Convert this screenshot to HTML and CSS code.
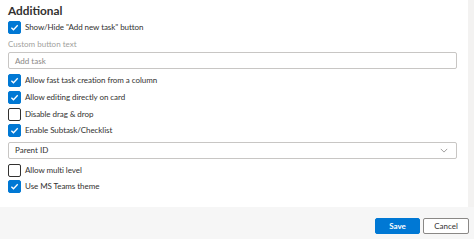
FILE: index.html
```html
<!DOCTYPE html>
<html>
<head>
<meta charset="utf-8">
<link rel="stylesheet" href="styles.css">
</head>
<body>
<div class="panel">
  <div class="main">
    <div class="content">
      <h2 class="title">Additional</h2>
      <label class="check on r1"><span class="box"><svg viewBox="0 0 12 12"><path d="M2.6 6.2 L4.9 8.5 L9.5 3.6"/></svg></span><span class="txt">Show/Hide "Add new task" button</span></label>
      <div class="field-label">Custom button text</div>
      <div class="input"><span class="ph">Add task</span></div>
      <div class="group">
        <label class="check on"><span class="box"><svg viewBox="0 0 12 12"><path d="M2.6 6.2 L4.9 8.5 L9.5 3.6"/></svg></span><span class="txt">Allow fast task creation from a column</span></label>
        <label class="check on"><span class="box"><svg viewBox="0 0 12 12"><path d="M2.6 6.2 L4.9 8.5 L9.5 3.6"/></svg></span><span class="txt">Allow editing directly on card</span></label>
        <label class="check"><span class="box"></span><span class="txt">Disable drag &amp; drop</span></label>
        <label class="check on"><span class="box"><svg viewBox="0 0 12 12"><path d="M2.6 6.2 L4.9 8.5 L9.5 3.6"/></svg></span><span class="txt">Enable Subtask/Checklist</span></label>
      </div>
      <div class="input select"><span class="val">Parent ID</span><svg class="chev" viewBox="0 0 10 6"><path d="M1 1 L5 5 L9 1"/></svg></div>
      <div class="group g2">
        <label class="check"><span class="box"></span><span class="txt">Allow multi level</span></label>
        <label class="check on"><span class="box"><svg viewBox="0 0 12 12"><path d="M2.6 6.2 L4.9 8.5 L9.5 3.6"/></svg></span><span class="txt">Use MS Teams theme</span></label>
      </div>
    </div>
    <div class="rail"></div>
  </div>
  <div class="footer">
    <button class="btn primary">Save</button>
    <button class="btn">Cancel</button>
  </div>
</div>
</body>
</html>
```
FILE: styles.css
```css
html, body {
  margin: 0;
  padding: 0;
  background: #ffffff;
}
body {
  font-family: "Lato", "Open Sans", sans-serif;
  color: #323130;
}
.panel {
  width: 474px;
  height: 242px;
  display: flex;
  flex-direction: column;
  overflow: hidden;
}
.main {
  display: flex;
  height: 207px;
}
.content {
  flex: 1;
  background: #ffffff;
  padding: 0 11px 0 8px;
  display: flex;
  flex-direction: column;
}
.rail {
  width: 6px;
  background: #f3f2f1;
}
.title {
  margin: 4px 0 0 0;
  font-family: "Lato", sans-serif;
  font-size: 11.8px;
  font-weight: 700;
  line-height: 14px;
  height: 14px;
}
.check {
  display: flex;
  align-items: center;
  height: 13px;
  font-size: 8px;
  letter-spacing: -0.06px;
}
.r1 {
  margin-top: 3px;
}
.box {
  width: 11px;
  height: 11px;
  border: 1px solid #323130;
  border-radius: 2px;
  display: flex;
  align-items: center;
  justify-content: center;
  flex: none;
  background: #fff;
}
.check.on .box {
  background: #0078d4;
  border-color: #0078d4;
}
.box svg {
  width: 11px;
  height: 11px;
  fill: none;
  stroke: #fff;
  stroke-width: 1.4;
}
.txt {
  margin-left: 4px;
  line-height: 13px;
}
.field-label {
  margin-top: 4px;
  font-size: 8px;
  line-height: 12px;
  color: #a19f9d;
}
.input {
  margin-top: 2px;
  height: 15px;
  border: 1px solid #c8c6c4;
  border-radius: 2px;
  display: flex;
  align-items: center;
  padding: 0 8px 0 6px;
  font-size: 8px;
}
.ph {
  color: #8a8886;
}
.group {
  margin-top: 5px;
  display: flex;
  flex-direction: column;
  gap: 3.8px;
}
.select {
  margin-top: 4.5px;
  justify-content: space-between;
}
.chev {
  width: 8px;
  height: 5px;
  fill: none;
  stroke: #8a8886;
  stroke-width: 1;
}
.g2 {
  margin-top: 5px;
  gap: 3px;
}
.footer {
  flex: 1;
  display: flex;
  justify-content: flex-end;
  align-items: flex-start;
  padding: 11px 5px 0 0;
  gap: 3px;
  background: linear-gradient(to bottom, #f6f6f6 0, #f6f6f6 32px, #ffffff 32px);
}
.btn {
  height: 16px;
  width: 46px;
  padding: 0;
  margin: 0;
  border: 1px solid #8a8886;
  border-radius: 2px;
  background: #ffffff;
  color: #323130;
  font-family: "Lato", "Open Sans", sans-serif;
  font-size: 8px;
  line-height: 14px;
  font-weight: 400;
}
.btn.primary {
  width: 45px;
  background: #0078d4;
  border-color: #0078d4;
  color: #ffffff;
  font-weight: 700;
}
```
